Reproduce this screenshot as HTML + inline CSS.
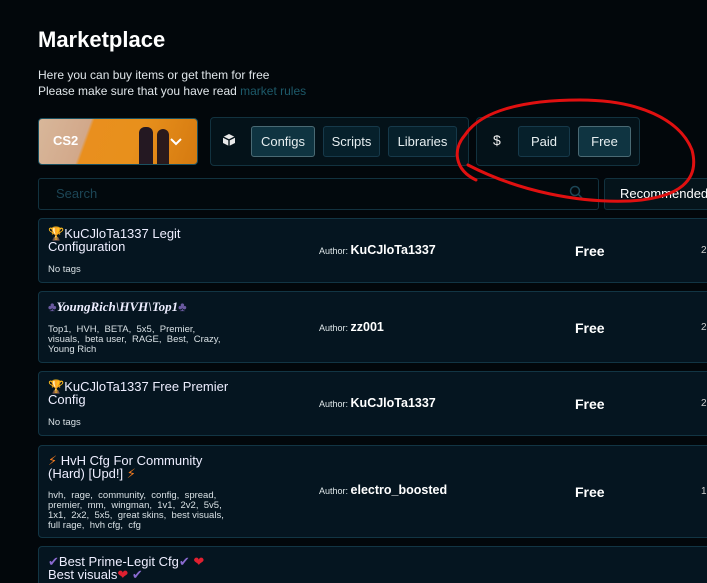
<!DOCTYPE html>
<html><head><meta charset="utf-8"><style>
*{box-sizing:border-box;margin:0;padding:0}
html,body{width:707px;height:583px;overflow:hidden}
body{background:#02070b;font-family:"Liberation Sans","DejaVu Sans",sans-serif;color:#e8eef0;position:relative}
.a{position:absolute}
.box{position:absolute;border:1px solid #12323f;border-radius:4px;background:#041219}
.btn{position:absolute;border:1px solid #16394a;border-radius:3px;background:#06202b;color:#e6eef0;font-size:13px;display:flex;align-items:center;justify-content:center}
.btn.on{background:#0f3441;border-color:#4a6a74}
.card{position:absolute;left:38px;width:680px;border:1px solid #123544;border-radius:4px;background:#051520}
.t{position:absolute;left:9px;font-size:13px;line-height:13px;color:#eef}
.tags{position:absolute;left:9px;font-size:9.5px;line-height:10px;color:#d8e0e4}
.au{position:absolute;left:280px;font-size:9px;color:#e0e8ea}
.au b{font-size:12.5px;color:#fff}
.fr{position:absolute;left:536px;font-size:14px;font-weight:bold;color:#fff}
.dt{position:absolute;left:662px;font-size:10px;color:#ccc}
</style></head><body>
<div class="a" style="left:38px;top:27px;font-size:22px;font-weight:bold;color:#fff">Marketplace</div>
<div class="a" style="left:38px;top:67px;font-size:12px;line-height:16px;color:#e0e6ea">Here you can buy items or get them for free<br>Please make sure that you have read <span style="color:#1d5a6a">market rules</span></div>

<div class="a" style="left:38px;top:118px;width:160px;height:47px;border:1px solid #1a5060;border-radius:4px;background:linear-gradient(110deg,#d8b79a 0%,#d2a88a 30%,#e98f1e 32%,#e8901c 60%,#d57a10 100%);overflow:hidden">
<div class="a" style="left:100px;top:8px;width:14px;height:38px;background:#241822;border-radius:6px 6px 0 0"></div>
<div class="a" style="left:118px;top:10px;width:12px;height:36px;background:#2a1a1c;border-radius:6px 6px 0 0"></div>
<div class="a" style="left:14px;top:14px;font-size:13px;font-weight:bold;color:#fff">CS2</div>
<svg class="a" style="left:131px;top:18px" width="12" height="9" viewBox="0 0 12 9"><path d="M1 2L6 7L11 2" stroke="#fff" stroke-width="2" fill="none"/></svg>
</div>

<div class="box" style="left:210px;top:117px;width:259px;height:49px"></div>
<svg class="a" style="left:222px;top:133px" width="14" height="14" viewBox="0 0 14 14"><path d="M7 1L13 4V10L7 13L1 10V4Z" fill="#e8e8e8"/><path d="M1 4L7 7L13 4M7 7V13" stroke="#041219" stroke-width="1.4" fill="none"/></svg>
<div class="btn on" style="left:251px;top:126px;width:64px;height:31px">Configs</div>
<div class="btn" style="left:323px;top:126px;width:57px;height:31px">Scripts</div>
<div class="btn" style="left:388px;top:126px;width:69px;height:31px">Libraries</div>

<div class="box" style="left:476px;top:117px;width:164px;height:49px"></div>
<div class="a" style="left:493px;top:132px;font-size:14px;color:#eee">$</div>
<div class="btn" style="left:518px;top:126px;width:52px;height:31px">Paid</div>
<div class="btn on" style="left:578px;top:126px;width:53px;height:31px">Free</div>

<div class="a" style="left:38px;top:178px;width:561px;height:32px;border:1px solid #12323f;border-radius:3px;background:#02090d"></div>
<div class="a" style="left:56px;top:186px;font-size:13px;color:#1c4656">Search</div>
<svg class="a" style="left:569px;top:185px" width="15" height="15" viewBox="0 0 15 15"><circle cx="6" cy="6" r="4.5" stroke="#1c4656" stroke-width="1.5" fill="none"/><path d="M9.5 9.5L13 13" stroke="#1c4656" stroke-width="1.5"/></svg>
<div class="a" style="left:604px;top:178px;width:120px;height:32px;border:1px solid #12323f;border-radius:3px;background:#05141b"></div>
<div class="a" style="left:620px;top:186px;font-size:13px;color:#fff;white-space:nowrap">Recommended</div>

<div class="card" style="top:218px;height:65px">
<div class="t" style="top:8px"><span style="color:#e0a020">&#127942;</span>KuCJloTa1337 Legit<br>Configuration</div>
<div class="tags" style="top:46px">No tags</div>
<div class="au" style="top:24px">Author: <b>KuCJloTa1337</b></div>
<div class="fr" style="top:24px">Free</div><div class="dt" style="top:26px">2</div>
</div>
<div class="card" style="top:291px;height:72px">
<div class="t" style="top:8px;font-family:'Liberation Serif',serif;font-style:italic;font-weight:bold"><span style="color:#6a5aa0;font-style:normal">&#9827;</span>YoungRich\HVH\Top1<span style="color:#6a5aa0;font-style:normal">&#9827;</span></div>
<div class="tags" style="top:33px">Top1,&nbsp; HVH,&nbsp; BETA,&nbsp; 5x5,&nbsp; Premier,<br>visuals,&nbsp; beta user,&nbsp; RAGE,&nbsp; Best,&nbsp; Crazy,<br>Young Rich</div>
<div class="au" style="top:28px">Author: <b>zz001</b></div>
<div class="fr" style="top:28px">Free</div><div class="dt" style="top:30px">2</div>
</div>
<div class="card" style="top:371px;height:65px">
<div class="t" style="top:8px"><span style="color:#e0a020">&#127942;</span>KuCJloTa1337 Free Premier<br>Config</div>
<div class="tags" style="top:46px">No tags</div>
<div class="au" style="top:24px">Author: <b>KuCJloTa1337</b></div>
<div class="fr" style="top:24px">Free</div><div class="dt" style="top:26px">2</div>
</div>
<div class="card" style="top:445px;height:93px">
<div class="t" style="top:8px"><span style="color:#f07a20">&#9889;</span> HvH Cfg For Community<br>(Hard) [Upd!] <span style="color:#f07a20">&#9889;</span></div>
<div class="tags" style="top:45px">hvh,&nbsp; rage,&nbsp; community,&nbsp; config,&nbsp; spread,<br>premier,&nbsp; mm,&nbsp; wingman,&nbsp; 1v1,&nbsp; 2v2,&nbsp; 5v5,<br>1x1,&nbsp; 2x2,&nbsp; 5x5,&nbsp; great skins,&nbsp; best visuals,<br>full rage,&nbsp; hvh cfg,&nbsp; cfg</div>
<div class="au" style="top:37px">Author: <b>electro_boosted</b></div>
<div class="fr" style="top:38px">Free</div><div class="dt" style="top:40px">1</div>
</div>
<div class="card" style="top:546px;height:60px">
<div class="t" style="top:8px"><span style="color:#8a6ad0">&#10004;</span>Best Prime-Legit Cfg<span style="color:#8a6ad0">&#10004;</span> <span style="color:#e02030">&#10084;</span><br>Best visuals<span style="color:#e02030">&#10084;</span> <span style="color:#8a6ad0">&#10004;</span></div>
</div>

<svg class="a" style="left:0;top:0" width="707" height="583"><path d="M476 180C455 170 452 150 465 135C480 112 520 100 580 100C640 100 680 120 692 150C700 180 680 198 630 201C580 203 520 192 468 165" stroke="#e01010" stroke-width="3" fill="none" stroke-linecap="round"/></svg>
</body></html>
